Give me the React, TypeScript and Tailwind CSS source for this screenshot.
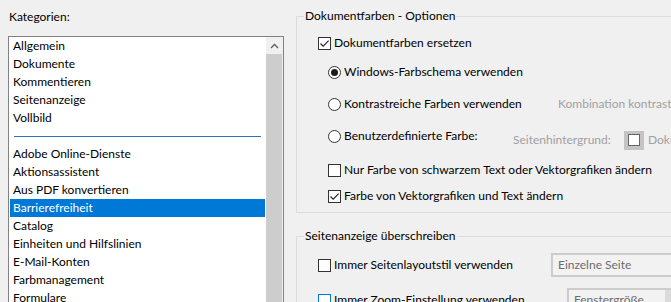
import React from 'react';

const oben = ['Allgemein', 'Dokumente', 'Kommentieren', 'Seitenanzeige', 'Vollbild'];
const unten = [
  'Adobe Online-Dienste',
  'Aktionsassistent',
  'Aus PDF konvertieren',
  'Barrierefreiheit',
  'Catalog',
  'Einheiten und Hilfslinien',
  'E-Mail-Konten',
  'Farbmanagement',
  'Formulare',
  'Identität',
];

function Box({ checked = false, blue = false }: { checked?: boolean; blue?: boolean }) {
  return (
    <span
      className={
        blue
          ? 'flex h-[13px] w-[13px] shrink-0 items-center justify-center border border-[#0078d7] bg-white'
          : 'flex h-[13px] w-[13px] shrink-0 items-center justify-center border border-[#333333] bg-white'
      }
    >
      {checked && (
        <svg width="11" height="11" viewBox="0 0 11 11">
          <path d="M1.5 5.5 L4.2 8.2 L9.6 2.6" fill="none" stroke="#222" strokeWidth="1.1" />
        </svg>
      )}
    </span>
  );
}

function Radio({ on = false }: { on?: boolean }) {
  return (
    <span className="flex h-[13px] w-[13px] shrink-0 items-center justify-center rounded-full border border-[#333333] bg-white">
      {on && <span className="h-[7px] w-[7px] rounded-full bg-[#1b1b1b]" />}
    </span>
  );
}

function Kategorien() {
  return (
    <div className="w-[296px] shrink-0 pl-[8px] pt-[9px]">
      <div className="h-[16px] pl-[1px] leading-[16px]">Kategorien:</div>
      <div className="mt-[11px] flex h-[280px] w-[276px] border border-[#828282] bg-white">
        <div className="flex-1">
          {oben.map((k) => (
            <div key={k} className="h-[18px] pl-[4px] leading-[18px]">
              {k}
            </div>
          ))}
          <div className="flex h-[18px] items-center pl-[5px] pr-[5px]">
            <div className="h-[1px] w-full bg-[#2f72b8]" />
          </div>
          {unten.map((k) =>
            k === 'Barrierefreiheit' ? (
              <div key={k} className="mx-[1px] h-[18px] bg-[#0078d7] pl-[3px] leading-[18px] text-white">
                {k}
              </div>
            ) : (
              <div key={k} className="h-[18px] pl-[4px] leading-[18px]">
                {k}
              </div>
            ),
          )}
        </div>
        <div className="flex w-[17px] shrink-0 flex-col bg-[#f0f0f0]">
          <div className="flex h-[17px] items-center justify-center">
            <svg width="9" height="6" viewBox="0 0 9 6">
              <path d="M1 5 L4.5 1.5 L8 5" fill="none" stroke="#606060" strokeWidth="1.4" />
            </svg>
          </div>
          <div className="mr-[1px] flex-1 bg-[#cdcdcd]" />
        </div>
      </div>
    </div>
  );
}

function Optionen() {
  return (
    <div className="w-[420px] shrink-0 pt-[8px]">
      <fieldset className="border border-[#dcdcdc] pb-[7px]">
        <legend className="ml-[7px] px-[1px] leading-[16px]">Dokumentfarben - Optionen</legend>
        <div className="mt-[10px] flex h-[18px] items-center gap-[3px] pl-[21px]">
          <Box checked />
          <span>Dokumentfarben ersetzen</span>
        </div>
        <div className="mt-[11px] flex h-[18px] items-center gap-[3px] pl-[31px]">
          <Radio on />
          <span>Windows-Farbschema verwenden</span>
        </div>
        <div className="mt-[14px] flex h-[18px] items-center pl-[31px]">
          <Radio />
          <span className="ml-[3px] w-[214px] shrink-0 whitespace-nowrap">Kontrastreiche Farben verwenden</span>
          <span className="whitespace-nowrap text-[#a0a0a0]">Kombination kontrastreicher Farben:</span>
        </div>
        <div className="mt-[14px] flex h-[18px] items-center pl-[31px]">
          <Radio />
          <span className="ml-[3px] w-[169px] shrink-0 whitespace-nowrap">Benutzerdefinierte Farbe:</span>
          <div className="mt-[8px] flex items-center">
            <span className="w-[111px] shrink-0 whitespace-nowrap text-[#a0a0a0]">Seitenhintergrund:</span>
            <span className="flex h-[19px] w-[20px] items-center justify-center bg-[#c4c4c4]">
              <span className="h-[12px] w-[12px] border border-[#666666] bg-white" />
            </span>
            <span className="ml-[4px] whitespace-nowrap text-[#a0a0a0]">Dokumenttext:</span>
          </div>
        </div>
        <div className="mt-[16px] flex h-[18px] items-center gap-[3px] pl-[31px]">
          <Box />
          <span>Nur Farbe von schwarzem Text oder Vektorgrafiken ändern</span>
        </div>
        <div className="mt-[8px] flex h-[18px] items-center gap-[3px] pl-[31px]">
          <Box checked />
          <span>Farbe von Vektorgrafiken und Text ändern</span>
        </div>
      </fieldset>
      <fieldset className="mt-[15px] h-[120px] border border-[#dcdcdc]">
        <legend className="ml-[7px] px-[1px] leading-[16px]">Seitenanzeige überschreiben</legend>
        <div className="mt-[9px] flex h-[24px] items-center pl-[21px]">
          <Box />
          <span className="ml-[3px] w-[217px] shrink-0 whitespace-nowrap">Immer Seitenlayoutstil verwenden</span>
          <div className="flex h-[24px] w-[140px] items-center border-2 border-[#cccccc] bg-[#f2f2f2] pl-[5px] text-[#6d6d6d]">
            Einzelne Seite
          </div>
        </div>
        <div className="mt-[11px] flex h-[24px] items-center pl-[21px]">
          <Box blue />
          <span className="ml-[3px] w-[233px] shrink-0 whitespace-nowrap">Immer Zoom-Einstellung verwenden</span>
          <div className="flex h-[24px] w-[120px] items-center border-2 border-[#cccccc] bg-[#f2f2f2] text-[#6d6d6d]">
            <span className="flex-1 pl-[5px]">Fenstergröße</span>
            <span className="h-full w-[20px] bg-[#dadada]" />
          </div>
        </div>
      </fieldset>
    </div>
  );
}

export default function App() {
  return (
    <div
      className="flex h-[302px] w-[671px] overflow-hidden bg-[#f0f0f0] text-[12px] text-black"
      style={{ fontFamily: 'Lato, "Noto Sans", sans-serif' }}
    >
      <Kategorien />
      <Optionen />
    </div>
  );
}
